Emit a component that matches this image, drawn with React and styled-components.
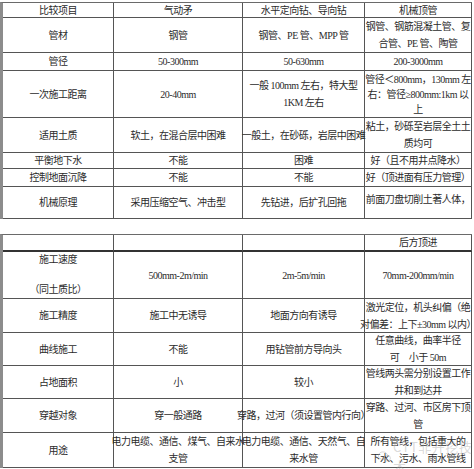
import React from 'react';
import styled, { createGlobalStyle } from 'styled-components';

const GlobalStyle = createGlobalStyle`
  html, body {
    margin: 0;
    padding: 0;
    background: #ffffff;
  }
  body {
    font-family: "Liberation Serif", "Noto Sans CJK SC", serif;
    color: #2b2b2b;
  }
`

const Page = styled.div`
  position: relative;
  width: 474px;
  height: 469px;
  padding-top: 2px;
  box-sizing: border-box;
  overflow: hidden;
`

const Sheet = styled.div`
  display: grid;
  grid-template-columns: 111px 129px 122px 107px;
  grid-template-rows: ${p => p.$rows};
  width: 472px;
  box-sizing: border-box;
  border-left: 3px solid #8c8c8c;
  border-top: 1px solid #6a6a6a;
  margin-top: ${p => p.$gap || 0}px;
`

const Cell = styled.div`
  display: flex;
  flex-direction: column;
  align-items: center;
  justify-content: ${p => (p.$top ? 'flex-start' : 'center')};
  padding-top: ${p => (p.$top ? 4 : 0)}px;
  box-sizing: border-box;
  border-right: 1px solid #555;
  border-bottom: ${p => (p.$heavy ? '2px solid #333' : '1px solid #555')};
  font-size: 10px;
  letter-spacing: -0.5px;
  line-height: ${p => p.$lh || 17}px;
  white-space: nowrap;
  min-width: 0;
  overflow: visible;
`

const Line = styled.span`
  display: block;
`

const Watermark = styled.div`
  position: absolute;
  left: 378px;
  top: 437px;
  display: flex;
  align-items: center;
  gap: 2px;
  color: rgba(160, 160, 160, 0.4);
  font-family: "Noto Sans CJK SC", sans-serif;
  font-size: 13px;
  letter-spacing: 0.5px;
  pointer-events: none;
`

const table1 = {
  rows: '15px 35px 18px 47px 35px 16px 18px 32px',
  data: [
    [['比较项目'], ['气动矛'], ['水平定向钻、导向钻'], ['机械顶管']],
    [['管材'], ['钢管'], ['钢管、PE 管、MPP 管'], ['钢管、钢筋混凝土管、复', '合管、PE 管、陶管']],
    [['管径'], ['50-300mm'], ['50-630mm'], ['200-3000mm']],
    [
      ['一次施工距离'],
      ['20-40mm'],
      ['一般 100mm 左右，特大型', '1KM 左右'],
      { lines: ['管径＜800mm，130mm 左', '右：管径≥800mm:1km 以', '上'], lh: 15 },
    ],
    [['适用土质'], ['软土，在混合层中困难'], ['一般土，在砂砾，岩层中困难'], ['粘土，砂砾至岩层全土土', '质均可']],
    [['平衡地下水'], ['不能'], ['困难'], ['好（且不用井点降水）']],
    [['控制地面沉降'], ['不能'], ['不能'], ['好（顶进面有压力管理）']],
    [['机械原理'], ['采用压缩空气、冲击型'], ['先钻进，后扩孔回拖'], { lines: ['前面刀盘切削土著人体，'], top: true }],
  ],
}

const table2 = {
  rows: '17px 47px 34px 33px 33px 34px 35px',
  data: [
    [{ lines: [''], heavy: true }, { lines: [''], heavy: true }, { lines: [''], heavy: true }, { lines: ['后方顶进'], heavy: true }],
    [{ lines: ['施工速度', '（同土质比）'], lh: 30 }, ['500mm-2m/min'], ['2m-5m/min'], ['70mm-200mm/min']],
    [['施工精度'], ['施工中无诱导'], ['地面方向有诱导'], ['激光定位，机头纠偏（绝', '对偏差：上下±30mm 以内）']],
    [['曲线施工'], ['不能'], ['用钻管前方导向头'], ['任意曲线，曲率半径', '可　小于 50m']],
    [['占地面积'], ['小'], ['较小'], ['管线两头需分别设置工作', '井和到达井']],
    [['穿越对象'], ['穿一般通路'], ['穿路，过河（须设置管内行向）'], ['穿路、过河、市区房下顶', '管']],
    [['用途'], ['电力电缆、通信、煤气、自来水', '支管'], ['电力电缆、通信、天然气、自', '来水管'], ['所有管线，包括重大的', '下水、污水、雨水管线']],
  ],
}

function Table({ spec, gap }) {
  return (
    <Sheet $rows={spec.rows} $gap={gap}>
      {spec.data.map((row, r) =>
        row.map((cell, c) => {
          const info = Array.isArray(cell) ? { lines: cell } : cell;
          return (
            <Cell key={r + '-' + c} $lh={info.lh} $top={info.top} $heavy={info.heavy}>
              {info.lines.map((t, i) => (
                <Line key={i}>{t || '\u00a0'}</Line>
              ))}
            </Cell>
          );
        })
      )}
    </Sheet>
  );
}

function ChatMark() {
  return (
    <svg width="15" height="13" viewBox="0 0 16 14">
      <ellipse cx="6" cy="6" rx="5.5" ry="4.6" fill="none" stroke="currentColor" strokeWidth="1.2" />
      <ellipse cx="11" cy="9" rx="4.2" ry="3.6" fill="none" stroke="currentColor" strokeWidth="1.2" />
    </svg>
  );
}

export default function App() {
  return (
    <Page>
      <GlobalStyle />
      <Table spec={table1} />
      <Table spec={table2} gap={15} />
      <Watermark>
        <ChatMark />
        <span>CTT非开挖技术</span>
      </Watermark>
    </Page>
  );
}
